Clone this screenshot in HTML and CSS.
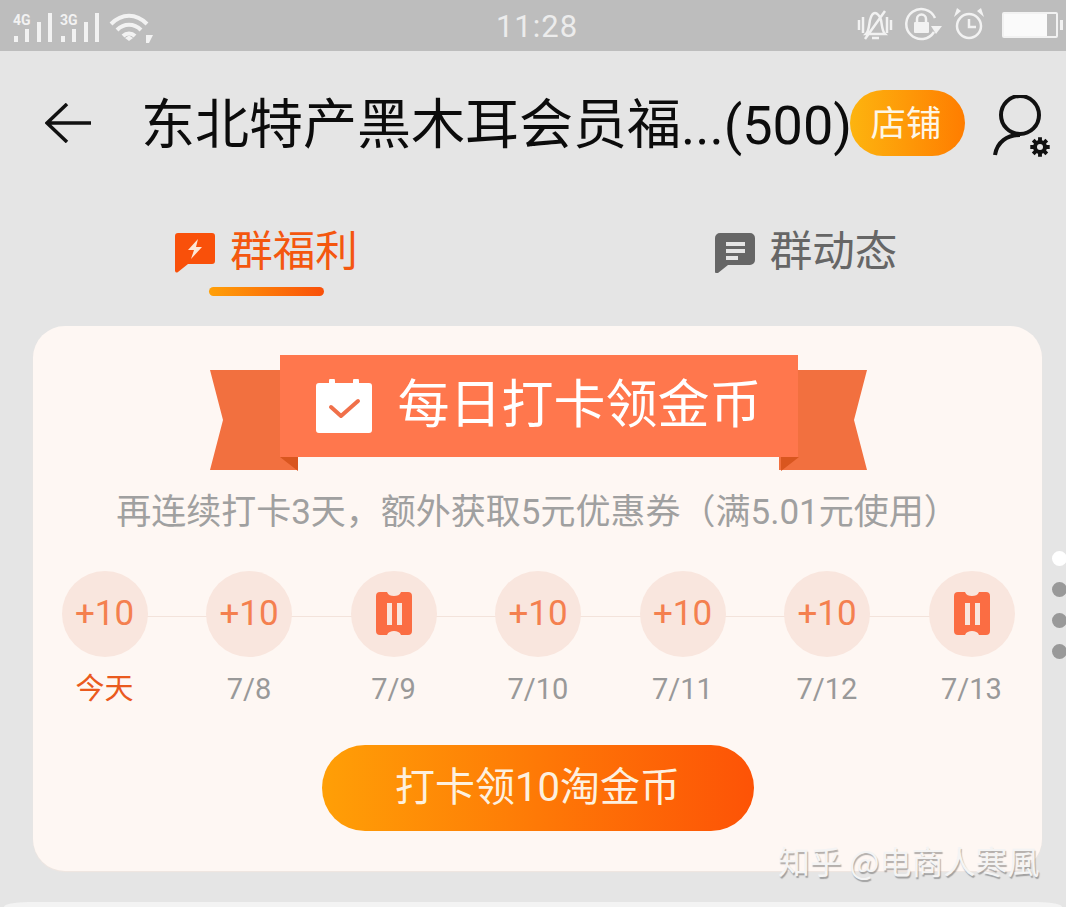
FILE: index.html
```html
<!DOCTYPE html>
<html lang="zh-CN">
<head>
    <meta charset="UTF-8">
    <meta name="viewport" content="width=device-width, initial-scale=1.0">
    <title>群福利</title>
    <link rel="stylesheet" href="styles.css">
</head>
<body>
    <div class="status-bar">
        <div class="status-left">
            <svg width="156" height="44" viewBox="0 0 156 44">
                <text x="13" y="21" class="net-label">4G</text>
                <rect x="14" y="32" width="4" height="6"/><rect x="25" y="25" width="4" height="13"/><rect x="37" y="18" width="4" height="20"/><rect x="48" y="9" width="4" height="29"/>
                <text x="60" y="21" class="net-label">3G</text>
                <rect x="61" y="32" width="4" height="6"/><rect x="72" y="25" width="4" height="13"/><rect x="84" y="18" width="4" height="20"/><rect x="95" y="9" width="4" height="29"/>
                <path class="wifi" d="M111 20c11-11 25-11 36 0M117 26c7-7 17-7 24 0M123 32c3.500-3.500 8.500-3.500 12 0"/>
                <path d="M125 34l4-2.500 4 2.500-4 3z"/>
                <path d="M146 31h7l-4 8h-3z"/>
            </svg>
        </div>
        <div class="status-time">11:28</div>
        <div class="status-right">
            <svg width="36" height="36" viewBox="0 0 36 36" class="st-line">
                <path d="M9 28c3-3 3-9 4-14 1-4 3-7 5-7s5 3 6 7c1 5 1 11 4 14zM15 32h7M8 33L28 5"/>
                <path d="M2 14v10M6 11v16M30 11v16M34 14v10"/>
            </svg>
            <svg width="38" height="36" viewBox="0 0 38 36" class="st-line">
                <path d="M29 26a15 15 0 1 1 1-14"/>
                <path class="st-fill" d="M26 20h11l-6 8z"/>
                <rect class="st-fill" x="9" y="16" width="15" height="11" rx="1"/>
                <path d="M12 16v-3a4.500 4.500 0 0 1 9 0v3"/>
            </svg>
            <svg width="32" height="36" viewBox="0 0 32 36" class="st-line alarm">
                <circle cx="16" cy="20" r="12"/>
                <path d="M16 13v8h7"/>
                <path class="st-fill" d="M1 11l7-6-4-3zM31 11l-7-6 4-3z"/>
            </svg>
            <div class="battery"><div class="battery-level"></div></div>
        </div>
    </div>

    <header class="top-nav">
        <svg class="back-icon" width="46" height="40" viewBox="0 0 46 40"><path d="M22 1L2 20l20 19M2 20h44"/></svg>
        <h1 class="group-title">东北特产黑木耳会员福...(500)</h1>
        <div class="shop-pill">店铺</div>
        <svg class="user-icon" width="58" height="64" viewBox="0 0 58 64">
            <circle cx="27" cy="20" r="19"/>
            <path d="M2 60c2-13 12-20 25-20"/>
            <g class="gear">
                <path d="M47 42v20M37 52h20M40 45l14 14M54 45L40 59"/>
                <circle cx="47" cy="52" r="7"/>
            </g>
            <circle cx="47" cy="52" r="3" class="gear-hole"/>
        </svg>
    </header>

    <nav class="tabs">
        <div class="tab tab-active">
            <div class="tab-main">
                <svg width="40" height="40" viewBox="0 0 40 40"><path fill="#f9500a" d="M3 0h34a3 3 0 0 1 3 3v25a3 3 0 0 1-3 3H13L3 39a2 2 0 0 1-3-1V3a3 3 0 0 1 3-3z"/><path fill="#fde6d6" d="M23 6l-10 11h6l-3 9 11-12h-6z"/></svg>
                <span>群福利</span>
            </div>
            <div class="tab-line"></div>
        </div>
        <div class="tab tab-other">
            <div class="tab-main">
                <svg width="40" height="40" viewBox="0 0 40 40"><path fill="#666" d="M5 0h30a5 5 0 0 1 5 5v22a5 5 0 0 1-5 5H13L3 40a2 2 0 0 1-3-1V5a5 5 0 0 1 5-5z"/><path fill="#e5e5e5" d="M11 9h19v4H11zM11 16h19v4H11zM11 23h12v4H11z"/></svg>
                <span>群动态</span>
            </div>
        </div>
    </nav>

    <section class="card">
        <div class="banner-wrap">
            <svg class="ribbon" width="658" height="116" viewBox="0 0 658 116">
                <path fill="#f2703f" d="M1 15h88v100H1l13-50z"/>
                <path fill="#f2703f" d="M658 15h-88v100h88l-13-50z"/>
                <path fill="#d9561f" d="M71 102h18v14z"/>
                <path fill="#d9561f" d="M590 102h-18v14z"/>
            </svg>
            <div class="banner">
                <svg width="56" height="54" viewBox="0 0 56 54">
                    <path fill="#fff" d="M3 4h10V2a3 3 0 0 1 6 0v2h18V2a3 3 0 0 1 6 0v2h10a3 3 0 0 1 3 3v44a3 3 0 0 1-3 3H3a3 3 0 0 1-3-3V7a3 3 0 0 1 3-3z"/>
                    <path fill="none" stroke="#f0704a" stroke-width="4" stroke-linecap="round" stroke-linejoin="round" d="M15 28l10 9 17-15"/>
                </svg>
                <span class="banner-text">每日打卡领金币</span>
            </div>
        </div>
        <p class="card-note">再连续打卡3天，额外获取5元优惠券（满5.01元使用）</p>

        <div class="days">
            <div class="day day-today"><div class="day-dot">+10</div><div class="day-label">今天</div></div>
            <div class="day"><div class="day-dot">+10</div><div class="day-label">7/8</div></div>
            <div class="day">
                <div class="day-dot">
                    <svg width="36" height="43" viewBox="0 0 36 43"><path fill="#fb6d43" d="M4 0h7c1 3 4 4 7 4s6-1 7-4h7a4 4 0 0 1 4 4v35a4 4 0 0 1-4 4h-7c-1-3-4-4-7-4s-6 1-7 4H4a4 4 0 0 1-4-4V4a4 4 0 0 1 4-4z"/><path fill="#f9e6de" d="M11 11h5v22h-5zM21 11h5v22h-5z"/></svg>
                </div>
                <div class="day-label">7/9</div>
            </div>
            <div class="day"><div class="day-dot">+10</div><div class="day-label">7/10</div></div>
            <div class="day"><div class="day-dot">+10</div><div class="day-label">7/11</div></div>
            <div class="day"><div class="day-dot">+10</div><div class="day-label">7/12</div></div>
            <div class="day">
                <div class="day-dot">
                    <svg width="36" height="43" viewBox="0 0 36 43"><path fill="#fb6d43" d="M4 0h7c1 3 4 4 7 4s6-1 7-4h7a4 4 0 0 1 4 4v35a4 4 0 0 1-4 4h-7c-1-3-4-4-7-4s-6 1-7 4H4a4 4 0 0 1-4-4V4a4 4 0 0 1 4-4z"/><path fill="#f9e6de" d="M11 11h5v22h-5zM21 11h5v22h-5z"/></svg>
                </div>
                <div class="day-label">7/13</div>
            </div>
        </div>

        <div class="checkin-btn">打卡领10淘金币</div>
    </section>

    <div class="next-card"></div>

    <div class="pager">
        <i class="pager-on"></i><i></i><i></i><i></i>
    </div>
    <div class="watermark">知乎 @电商人寒風</div>
</body>
</html>
```

FILE: styles.css
```css
* {
    margin: 0;
    padding: 0;
    box-sizing: border-box;
}

html, body {
    height: 907px;
    overflow: hidden;
}

body {
    position: relative;
    background: #e5e5e5;
    font-family: Roboto, 'Noto Sans CJK SC', sans-serif;
}

/* Status bar */
.status-bar {
    height: 51px;
    background: #bdbdbd;
    display: grid;
    grid-template-columns: 1fr auto 1fr;
    align-items: center;
    color: #f2f2f2;
}

.status-left svg {
    display: block;
    fill: #f2f2f2;
}

.net-label {
    font-size: 14px;
    font-weight: 700;
}

.wifi {
    fill: none;
    stroke: #f2f2f2;
    stroke-width: 4;
}

.status-time {
    font-size: 31px;
    letter-spacing: 1px;
    color: #ececec;
    padding-left: 8px;
    padding-top: 1px;
}

.status-right {
    display: flex;
    align-items: center;
    justify-content: flex-end;
    gap: 12px;
    padding-right: 5px;
}

.st-line {
    fill: none;
    stroke: #f2f2f2;
    stroke-width: 2.500;
    margin-bottom: 3px;
}

.st-line .st-fill {
    fill: #f2f2f2;
    stroke: none;
}

.alarm {
    margin-left: -2px;
    margin-right: 2px;
}

.battery {
    width: 56px;
    height: 26px;
    border: 2px solid #f2f2f2;
    border-radius: 2px;
    margin: -2px 3px 0;
    position: relative;
}

.battery::after {
    content: '';
    position: absolute;
    right: -7px;
    top: 6px;
    width: 3px;
    height: 10px;
    background: #f2f2f2;
}

.battery-level {
    width: 43px;
    height: 100%;
    background: #fafafa;
}

/* Header */
.top-nav {
    display: flex;
    align-items: center;
    height: 148px;
    padding-left: 45px;
}

.back-icon {
    fill: none;
    stroke: #111;
    stroke-width: 3.500;
    flex-shrink: 0;
    margin-top: -4px;
}

.group-title {
    font-size: 54px;
    font-weight: 400;
    color: #0c0c0c;
    white-space: nowrap;
    margin-left: 50px;
    width: 709px;
    padding-bottom: 10px;
}

.shop-pill {
    width: 115px;
    height: 66px;
    border-radius: 33px;
    background: linear-gradient(90deg, #fdb40f, #ff7d00);
    color: #fdf6e6;
    font-size: 35.500px;
    padding: 0 3px 4px 0;
    display: flex;
    align-items: center;
    justify-content: center;
    margin-top: -5px;
    flex-shrink: 0;
}

.user-icon {
    margin-left: 28px;
    margin-top: 4px;
    fill: none;
    stroke: #111;
    stroke-width: 4;
    flex-shrink: 0;
}

.user-icon .gear circle {
    fill: #111;
    stroke: none;
}

.user-icon .gear path {
    stroke-width: 4;
    transform: scale(0.97);
    transform-origin: 47px 52px;
}

.user-icon .gear-hole {
    fill: #e5e5e5;
    stroke: none;
}

/* Tabs */
.tabs {
    display: grid;
    grid-template-columns: 1fr 1fr;
    height: 127px;
}

.tab {
    display: flex;
    flex-direction: column;
    align-items: center;
    padding-top: 25px;
}

.tab-main {
    display: flex;
    align-items: center;
    gap: 15px;
    font-size: 42.500px;
    line-height: 56px;
}

.tab-main svg {
    margin-top: 2px;
}

.tab-active {
    color: #f4570f;
}

.tab-other {
    color: #666;
    margin-left: 8px;
    padding-left: 5px;
}

.tab-line {
    width: 115px;
    height: 9px;
    border-radius: 5px;
    margin-top: 7px;
    background: linear-gradient(90deg, #ffa008, #f9500a);
}

/* Card */
.card {
    width: 1009px;
    height: 545px;
    margin-left: 33px;
    background: #fef7f3;
    border-radius: 32px;
    padding-top: 29px;
    display: flex;
    flex-direction: column;
    align-items: center;
    box-shadow: 0 1px 1px #f0e6e0;
}

.banner-wrap {
    position: relative;
    width: 658px;
    height: 116px;
    display: flex;
    justify-content: center;
}

.ribbon {
    position: absolute;
    left: 0;
    top: 0;
}

.banner {
    position: relative;
    width: 518px;
    height: 102px;
    margin-left: 2px;
    background: #ff774d;
    color: #fff;
    display: flex;
    align-items: center;
    gap: 26px;
    padding-left: 36px;
    font-size: 52px;
}

.banner-text {
    padding-bottom: 12px;
    white-space: nowrap;
}

.card-note {
    color: #a0a0a0;
    font-size: 35px;
    line-height: 44px;
    margin-top: 20px;
    white-space: nowrap;
}

.days {
    position: relative;
    display: grid;
    grid-template-columns: repeat(7, 144.500px);
    margin-top: 36px;
    width: 1011.500px;
    margin-left: 1px;
}

.days::before {
    content: '';
    position: absolute;
    left: 72px;
    right: 72px;
    top: 45px;
    height: 1px;
    background: #f3e3db;
}

.day {
    position: relative;
    display: flex;
    flex-direction: column;
    align-items: center;
}

.day-dot {
    width: 86px;
    height: 86px;
    border-radius: 50%;
    background: #f9e6de;
    color: #f4804f;
    font-size: 35px;
    padding-bottom: 2px;
    display: flex;
    align-items: center;
    justify-content: center;
}

.day-label {
    font-size: 29px;
    line-height: 38px;
    margin-top: 13px;
    color: #999;
}

.day-today .day-label {
    color: #ea5a1e;
}

.checkin-btn {
    width: 432px;
    height: 86px;
    border-radius: 43px;
    margin-top: 37px;
    background: linear-gradient(90deg, #ff9f06, #fd5306);
    color: #fdf0df;
    font-size: 40px;
    padding-bottom: 8px;
    display: flex;
    align-items: center;
    justify-content: center;
}

.next-card {
    height: 5px;
    margin-top: 31px;
    margin-left: 4px;
    margin-right: 4px;
    background: #f3f3f3;
    border-radius: 24px 24px 0 0 / 5px 5px 0 0;
}

/* Overlays */
.pager {
    position: absolute;
    left: 1052px;
    top: 551px;
    display: flex;
    flex-direction: column;
    gap: 16px;
}

.pager i {
    display: block;
    width: 15px;
    height: 15px;
    border-radius: 50%;
    background: #999;
}

.pager .pager-on {
    background: #fff;
}

.watermark {
    position: absolute;
    left: 778px;
    top: 839px;
    font-family: 'Noto Sans CJK SC', sans-serif;
    font-size: 32px;
    line-height: 42px;
    color: #f4f4f4;
    text-shadow: 1px 2px 1px rgba(0, 0, 0, 0.3);
    white-space: nowrap;
}
```
